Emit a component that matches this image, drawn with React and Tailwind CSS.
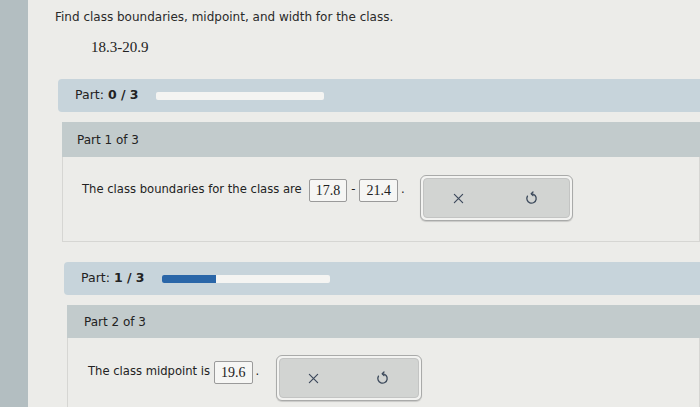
import React from "react";

const sans = { fontFamily: '"DejaVu Sans", Verdana, sans-serif' };
const serif = { fontFamily: '"Liberation Serif", "Times New Roman", serif' };

function XIcon() {
  return (
    <svg width="11" height="11" viewBox="0 0 12 12" fill="none" stroke="#3d4a5c" strokeWidth="1.3" strokeLinecap="round">
      <path d="M1.5 1.5 L10.5 10.5 M10.5 1.5 L1.5 10.5" />
    </svg>
  );
}

function UndoIcon() {
  return (
    <svg width="15" height="16" viewBox="0 0 16 16" fill="none" stroke="#3d4a5c" strokeWidth="1.4" strokeLinecap="round" strokeLinejoin="round">
      <path d="M8 3.5 A5 5 0 1 1 3.67 6" />
      <path d="M9.6 1.6 L7.7 3.5 L9.6 5.4" />
    </svg>
  );
}

function Box({ v }) {
  return (
    <span className="inline-flex items-center justify-center h-[23px] px-[6px] border border-[#9a9a9a] bg-[#f6f6f4] text-[14px] text-[#222] rounded-[2px]" style={serif}>
      {v}
    </span>
  );
}

function Buttons({ w }) {
  return (
    <div className={`${w} h-[46px] rounded-[6px] border border-[#a9aaa9] bg-[#f3f3f1] p-[2px] shadow-[0_1px_1px_rgba(0,0,0,0.15)]`}>
      <div className="w-full h-full rounded-[4px] bg-[#d2d4d2] border border-[#c3c4c3] flex items-center justify-around">
        <XIcon />
        <UndoIcon />
      </div>
    </div>
  );
}

function PartBar({ n, fill, ml }) {
  return (
    <div className={`${ml} h-[33px] rounded-l-[4px] bg-[#c7d4db] flex items-center pl-[17px] text-[12.5px] text-[#222]`} style={sans}>
      <span>Part: <b>{n} / 3</b></span>
      <div className="ml-[17px] w-[168px] h-[8px] rounded-[2px] bg-[#f4f4f2] overflow-hidden">
        <div className={`${fill} h-full bg-[#2a66a8]`} />
      </div>
    </div>
  );
}

export default function App() {
  return (
    <div className="w-[700px] h-[407px] overflow-hidden flex bg-[#ecece9]" style={sans}>
      <div className="w-[28px] shrink-0 bg-[#b3bec1]" />
      <div className="flex-1 flex flex-col pl-[27px]">
        <div className="pt-[9px] text-[12px] text-[#2a2a2a] leading-[16px]">
          Find class boundaries, midpoint, and width for the class.
        </div>
        <div className="ml-[36px] mt-[13px] text-[15px] text-[#222] leading-[18px]" style={serif}>
          18.3-20.9
        </div>
        <div className="mt-[23px]">
          <PartBar n="0" fill="w-0" ml="ml-[3px]" />
        </div>
        <div className="ml-[7px] mt-[10px] flex flex-col">
          <div className="h-[35px] bg-[#c2cbcc] flex items-center pl-[15px] text-[12px] text-[#222]">Part 1 of 3</div>
          <div className="h-[85px] bg-[#ecece9] border border-[#d6d6d3] border-t-0 flex items-start pt-[19px] pl-[19px] text-[11.6px] text-[#222]">
            <div className="flex items-center gap-[3px] h-[26px] mt-[1px]">
              <span className="mr-[4px]">The class boundaries for the class are</span>
              <Box v="17.8" />
              <span className="mx-[1px]">-</span>
              <Box v="21.4" />
              <span>.</span>
            </div>
            <div className="ml-[15px] -mt-[1px]">
              <Buttons w="w-[153px]" />
            </div>
          </div>
        </div>
        <div className="mt-[20px]">
          <PartBar n="1" fill="w-[54px]" ml="ml-[9px]" />
        </div>
        <div className="ml-[12px] mt-[10px] flex flex-col">
          <div className="h-[33px] bg-[#c2cbcc] flex items-center pl-[17px] text-[12px] text-[#222]">Part 2 of 3</div>
          <div className="h-[80px] bg-[#ecece9] border border-[#d6d6d3] border-t-0 flex items-start pt-[17px] pl-[20px] text-[11.6px] text-[#222]">
            <div className="flex items-center gap-[3px] h-[26px] mt-[4px]">
              <span className="mr-[1px]">The class midpoint is</span>
              <Box v="19.6" />
              <span>.</span>
            </div>
            <div className="ml-[17px]">
              <Buttons w="w-[146px]" />
            </div>
          </div>
        </div>
      </div>
    </div>
  );
}
